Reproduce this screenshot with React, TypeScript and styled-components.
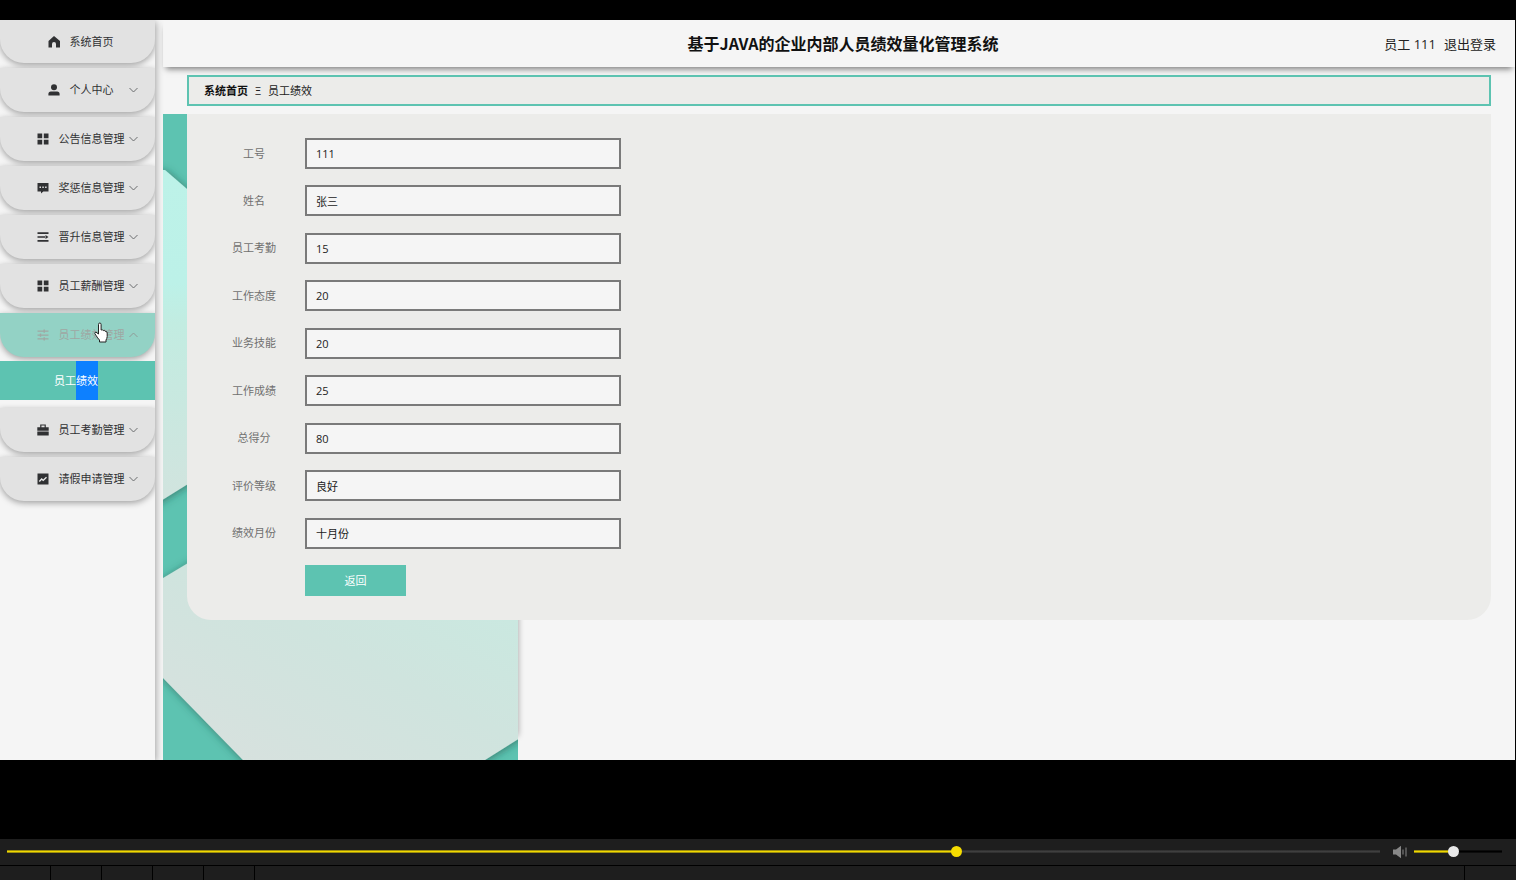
import React from "react";
import styled, { createGlobalStyle, css } from "styled-components";

const GlobalStyle = createGlobalStyle`
  * { box-sizing: border-box; }
  body {
    margin: 0;
    background: #000;
    font-family: "Open Sans", "Noto Sans CJK SC", sans-serif;
    font-size: 11px;
    line-height: 16px;
    color: #222;
  }
  button, input { font-family: inherit; font-size: inherit; }
  a { color: inherit; text-decoration: none; }
`;

const Screen = styled.div`
  display: flex;
  flex-direction: column;
  min-height: 100vh;
  padding-top: 20px;
`;

const Stage = styled.div`
  position: relative;
  flex: 1;
  display: grid;
  grid-template-columns: 155px 1fr;
  column-gap: 8px;
  margin-right: 1px;
  background: #f5f5f5;
  overflow: hidden;
`;

const Sidebar = styled.nav`
  box-shadow: 1px 2px 7px rgba(0, 0, 0, 0.35);
  background: #f5f5f5;
  overflow: hidden;
`;

const Menu = styled.ul`
  list-style: none;
  margin: 0;
  padding: 0;
  display: flex;
  flex-direction: column;
  gap: 5px;
`;

const MenuButton = styled.button<{ $active?: boolean; $first?: boolean }>`
  display: grid;
  grid-template-columns: 32px 1fr 26px;
  align-items: center;
  width: 100%;
  height: ${(p) => (p.$first ? 43 : 44)}px;
  padding: 0;
  border: 0;
  border-radius: 0 0 24px 24px;
  background: #e2e2e2;
  color: #303133;
  line-height: 16px;
  box-shadow: 0 2px 6px rgba(0, 0, 0, 0.35);
  cursor: pointer;
  ${(p) =>
    p.$active &&
    css`
      background: #93d2c5;
      color: #9fa7a3;
    `}
`;

const MenuText = styled.span`
  grid-column: 2;
  display: flex;
  align-items: center;
  justify-content: center;
  gap: 10px;
  white-space: nowrap;
`;

const SubLink = styled.a`
  display: flex;
  align-items: center;
  justify-content: center;
  height: 39px;
  margin: 4px 0 3px;
  padding-right: 3px;
  background: #5dc3b1;
  color: #fff;
`;

const Selected = styled.span`
  display: flex;
  align-items: center;
  align-self: stretch;
  background: #0d80ff;
`;

const Page = styled.div`
  display: flex;
  flex-direction: column;
  min-width: 0;
`;

const Header = styled.header`
  display: grid;
  grid-template-columns: 1fr auto 1fr;
  align-items: center;
  height: 47px;
  padding: 0 19px 0 27px;
  box-shadow: 0 5px 6px -3px rgba(0, 0, 0, 0.5);
`;

const Title = styled.h1`
  grid-column: 2;
  margin: 0;
  padding-bottom: 2px;
  font-family: "Noto Sans CJK SC", sans-serif;
  font-size: 16px;
  line-height: 24px;
  color: #111;
`;

const Account = styled.div`
  display: flex;
  justify-content: flex-end;
  gap: 8px;
  font-size: 13px;
  line-height: 20px;
`;

const Crumbs = styled.nav`
  display: flex;
  align-items: center;
  gap: 7px;
  height: 31px;
  margin: 8px 24px;
  padding: 0 15px;
  border: 2px solid #5dc3b1;
  background: #ececea;
`;

const Home = styled.a`
  font-weight: 700;
  color: #111;
`;

const Content = styled.main`
  flex: 1;
  display: grid;
  grid-template-columns: 24px 1fr 24px;
  grid-template-rows: 1fr;
`;

const Backdrop = styled.svg`
  grid-area: 1 / 1 / 2 / 4;
  display: block;
  width: 370px;
  height: 646px;
`;

const Form = styled.form`
  grid-area: 1 / 2 / 2 / 3;
  align-self: start;
  position: relative;
  display: flex;
  flex-direction: column;
  justify-content: space-between;
  min-height: 506px;
  padding: 24px;
  border-radius: 0 0 24px 24px;
  background: #ececea;
`;

const Field = styled.div`
  display: grid;
  grid-template-columns: 86px 316px;
  column-gap: 8px;
  align-items: center;
`;

const Label = styled.label`
  text-align: center;
  color: #707070;
`;

const TextBox = styled.input`
  height: 31px;
  width: 100%;
  padding: 0 9px;
  border: 2px solid #7a7a7a;
  border-radius: 0;
  background: #f5f5f5;
  color: #222;
  outline: 0;
`;

const BackButton = styled.button`
  grid-column: 2;
  width: 101px;
  height: 31px;
  padding: 0;
  border: 0;
  background: #5dc3b1;
  color: #fff;
`;

const Pointer = styled.svg`
  position: absolute;
  left: 94px;
  top: 302px;
  width: 14px;
  height: 21px;
  pointer-events: none;
`;

const Player = styled.footer`
  margin-top: 79px;
  background: #000;
`;

const Timeline = styled.div`
  display: flex;
  align-items: center;
  height: 26px;
  padding: 0 14px 1px 7px;
  background: #1e1e1e;
`;

const Range = styled.input<{ $fill: number; $rest: string; $knob: string }>`
  appearance: none;
  height: 11px;
  margin: 0;
  background:
    linear-gradient(rgba(30, 30, 30, 0.4) 1px, transparent 1px 2px, rgba(30, 30, 30, 0.4) 2px)
      center / 100% 3px no-repeat,
    linear-gradient(to right, #f0d800 ${(p) => p.$fill}%, ${(p) => p.$rest} ${(p) => p.$fill}%)
      center / 100% 3px no-repeat;
  &::-webkit-slider-thumb {
    appearance: none;
    width: 11px;
    height: 11px;
    border-radius: 50%;
    background: ${(p) => p.$knob};
  }
`;

const Seek = styled(Range)`
  flex: 1;
  min-width: 0;
`;

const Volume = styled(Range)`
  width: 88px;
`;

const Mute = styled.button`
  display: flex;
  margin: 0 6px 0 12px;
  padding: 0;
  border: 0;
  background: none;
`;

const Controls = styled.div`
  display: grid;
  grid-template-columns: repeat(5, 50px) 1fr 51px;
  column-gap: 1px;
  margin-top: 1px;
  height: 14px;
`;

const Cell = styled.div`
  background: #1e1e1e;
`;

type IconName = "home" | "user" | "grid" | "chat" | "fold" | "sliders" | "case" | "chart";

const shapes: Record<IconName, React.ReactNode> = {
  home: <path d="M6 0 12 5V11.500H8V8A2 2 0 0 0 4 8V11.500H.5V5Z" />,
  user: (
    <>
      <circle cx="6" cy="3.3" r="3" />
      <path d="M.4 11.500V10A2.500 2.500 0 0 1 2.900 7.500H9.100A2.500 2.500 0 0 1 11.600 10V11.500Z" />
    </>
  ),
  grid: <path d="M.5.500H5.200V5.200H.5ZM6.800.500H11.500V5.200H6.800ZM.5 6.800H5.200V11.500H.5ZM6.800 6.800H11.500V11.500H6.800Z" />,
  chat: (
    <path
      fillRule="evenodd"
      d="M.5 1H11.500V9.500H6.300L4 11.600V9.500H.5ZM2.500 4.400V5.900H4V4.400ZM5.300 4.400V5.900H6.800V4.400ZM8.100 4.400V5.900H9.600V4.400Z"
    />
  ),
  fold: <path d="M.5 1.300H11.500V2.900H.5ZM.5 5.200H8V6.800H.5ZM.5 9.100H11.500V10.700H.5ZM8.500 4 11.500 6 8.500 8Z" />,
  sliders: (
    <path d="M.5 1.500H6.500V.500H7.900V1.500H11.500V2.800H7.900V3.800H6.500V2.800H.5ZM.5 5.400H2.800V4.400H4.200V5.400H11.500V6.700H4.200V7.700H2.800V6.700H.5ZM.5 9.300H6.500V8.300H7.900V9.300H11.500V10.600H7.900V11.600H6.500V10.600H.5Z" />
  ),
  case: (
    <path
      fillRule="evenodd"
      d="M3.200 3.200V.500H8.800V3.200H11.700V6.700H.3V3.200ZM4.400 1.600V3.200H7.600V1.600ZM.3 7.500H11.700V11.500H.3Z"
    />
  ),
  chart: (
    <>
      <path d="M.5.500H11.500V11.500H.5Z" />
      <path d="M2.300 8.500 4.700 6 6.200 7.400 9.500 4.200" fill="none" stroke="#e8e8e8" strokeWidth="1.400" />
    </>
  ),
};

const Icon = ({ name }: { name: IconName }) => (
  <svg width="12" height="12" viewBox="0 0 12 12" fill="currentColor" aria-hidden="true">
    {shapes[name]}
  </svg>
);

const Chevron = ({ up }: { up?: boolean }) => (
  <svg width="9" height="6" viewBox="0 0 9 6" fill="none" stroke={up ? "#8f9a96" : "#6a6c6f"} aria-hidden="true">
    <path d={up ? "M.5 5 4.500 1 8.500 5" : "M.5 1 4.500 5 8.500 1"} />
  </svg>
);

const menu: { icon: IconName; text: string; plain?: boolean; open?: boolean }[] = [
  { icon: "home", text: "系统首页", plain: true },
  { icon: "user", text: "个人中心" },
  { icon: "grid", text: "公告信息管理" },
  { icon: "chat", text: "奖惩信息管理" },
  { icon: "fold", text: "晋升信息管理" },
  { icon: "grid", text: "员工薪酬管理" },
  { icon: "sliders", text: "员工绩效管理", open: true },
  { icon: "case", text: "员工考勤管理" },
  { icon: "chart", text: "请假申请管理" },
];

const fields = [
  ["工号", "111"],
  ["姓名", "张三"],
  ["员工考勤", "15"],
  ["工作态度", "20"],
  ["业务技能", "20"],
  ["工作成绩", "25"],
  ["总得分", "80"],
  ["评价等级", "良好"],
  ["绩效月份", "十月份"],
];

const PaperArt = () => (
  <Backdrop viewBox="0 0 370 646" aria-hidden="true">
    <defs>
      <linearGradient id="upper" x1="0" y1="0" x2="0" y2="1">
        <stop offset="0" stopColor="#bdf2e8" />
        <stop offset="0.33" stopColor="#bcf1e8" />
        <stop offset="0.45" stopColor="#c2ece1" />
        <stop offset="1" stopColor="#d2e3de" />
      </linearGradient>
      <linearGradient id="lower" gradientUnits="userSpaceOnUse" x1="110" y1="670" x2="250" y2="400">
        <stop offset="0" stopColor="#d7e1de" />
        <stop offset="0.5" stopColor="#cfe4de" />
        <stop offset="1" stopColor="#c8eae1" />
      </linearGradient>
      <filter id="shade" x="-20%" y="-20%" width="140%" height="140%">
        <feDropShadow dx="1" dy="1" stdDeviation="4" floodColor="#1c5045" floodOpacity="0.6" />
      </filter>
      <filter id="edge" filterUnits="userSpaceOnUse" x="330" y="280" width="40" height="366">
        <feGaussianBlur stdDeviation="3" />
      </filter>
      <clipPath id="sheet">
        <path d="M0 0H355V646H0Z" />
      </clipPath>
    </defs>
    <path d="M340 300H355V622H340Z" fill="#000" opacity="0.35" filter="url(#edge)" />
    <g clipPath="url(#sheet)">
      <path d="M0 0H355V646H0Z" fill="#5dc3b1" />
      <path d="M-20 56H2L120 158V311L-20 398Z" fill="url(#upper)" filter="url(#shade)" />
      <path d="M-40 488 200 344H400V597L322 646 262 684H117L0 564-40 523Z" fill="url(#lower)" filter="url(#shade)" />
    </g>
  </Backdrop>
);

export default function App() {
  return (
    <Screen>
      <GlobalStyle />
      <Stage>
        <Sidebar>
          <Menu>
            {menu.map((m) => (
              <li key={m.text}>
                <MenuButton type="button" $active={m.open} $first={m.plain}>
                  <MenuText>
                    <Icon name={m.icon} />
                    {m.text}
                  </MenuText>
                  {!m.plain && <Chevron up={m.open} />}
                </MenuButton>
                {m.open && (
                  <SubLink href="#performance">
                    员工<Selected>绩效</Selected>
                  </SubLink>
                )}
              </li>
            ))}
          </Menu>
        </Sidebar>
        <Page>
          <Header>
            <Title>基于JAVA的企业内部人员绩效量化管理系统</Title>
            <Account>
              <span>员工 111</span>
              <a href="#logout">退出登录</a>
            </Account>
          </Header>
          <Crumbs>
            <Home href="#home">系统首页</Home>
            <span>Ξ</span>
            <span>员工绩效</span>
          </Crumbs>
          <Content>
            <PaperArt />
            <Form onSubmit={(e) => e.preventDefault()}>
              {fields.map(([label, value], i) => (
                <Field key={label}>
                  <Label htmlFor={`field-${i}`}>{label}</Label>
                  <TextBox id={`field-${i}`} value={value} readOnly />
                </Field>
              ))}
              <Field>
                <BackButton type="button">返回</BackButton>
              </Field>
            </Form>
          </Content>
        </Page>
        <Pointer viewBox="0 0 14 21" aria-hidden="true">
          <path
            d="M4.500 12V2.500Q4.500 1 5.800 1T7.100 2.500V8Q9 7.400 9.300 8.600 11 8.100 11.300 9.400 13.200 9.200 13.200 11V14.500Q13 16.500 12 18V20H5.500V18Q3.500 16 2.300 13.800L.8 11.600Q.6 10 2 10.200Z"
            fill="#fff"
            stroke="#222"
          />
        </Pointer>
      </Stage>
      <Player>
        <Timeline>
          <Seek type="range" max={1000} defaultValue={693} aria-label="播放进度" $fill={69} $rest="#3f3f3f" $knob="#f5dc00" />
          <Mute type="button" aria-label="静音">
            <svg width="16" height="14" viewBox="0 0 16 14" fill="#888" aria-hidden="true">
              <path d="M1 4.500H4L9 .800V13.200L4 9.500H1ZM10.500 4.500H11.500V9.500H10.500ZM13.500 2.500H14.500V11.500H13.500Z" />
            </svg>
          </Mute>
          <Volume type="range" max={1000} defaultValue={436} aria-label="音量" $fill={44} $rest="#000" $knob="#e8e8e8" />
        </Timeline>
        <Controls>
          {[0, 1, 2, 3, 4, 5, 6].map((n) => (
            <Cell key={n} />
          ))}
        </Controls>
      </Player>
    </Screen>
  );
}
